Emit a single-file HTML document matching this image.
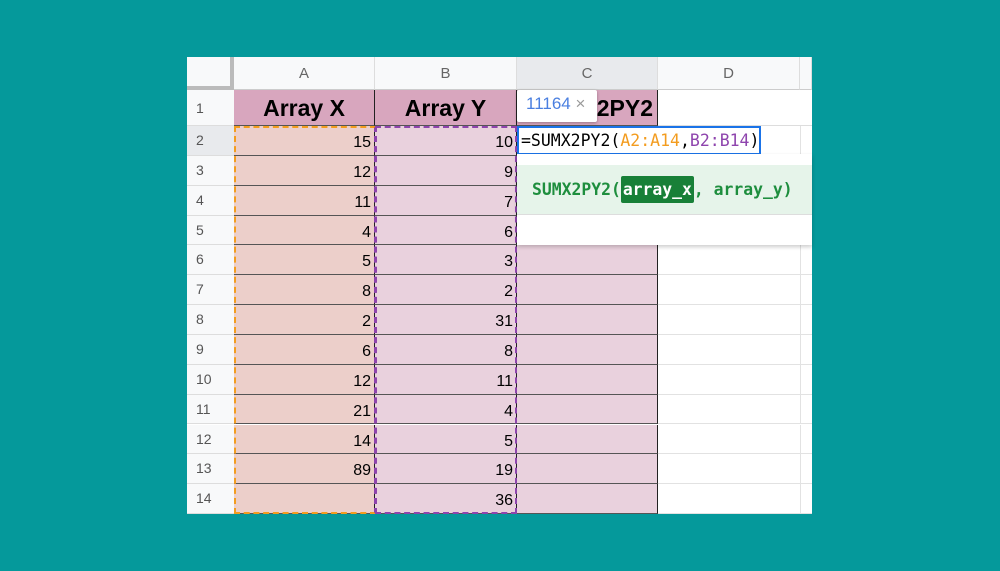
<!DOCTYPE html><html><head><style>
body{margin:0;width:1000px;height:571px;background:#05999b;position:relative;overflow:hidden;font-family:"Liberation Sans",Arial,sans-serif}
.a{position:absolute;box-sizing:border-box}
.sheet{left:187px;top:57px;width:625px;height:457px;background:#fff}
.hd{color:#666;font-size:15px;text-align:center;line-height:33px;top:0;height:33px;background:#f8f9fa;border-right:1px solid #ddd;border-bottom:1px solid #ccc}
.rn{left:0;width:47px;color:#555;font-size:14px;text-align:left;padding-left:9px;background:#f8f9fa;border-bottom:1px solid #ddd}
.c{font-size:16px;text-align:right;padding-right:3px;color:#000;border-bottom:1px solid #555;border-right:1px solid #222}
.mono{font-family:"DejaVu Sans Mono","Liberation Mono",monospace}
</style></head><body>
<div class="a sheet">
<div class="a hd" style="left:0;width:47px;border-right:4px solid #bbb;border-bottom:4px solid #bbb"></div>
<div class="a hd" style="left:47px;width:141px">A</div>
<div class="a hd" style="left:188px;width:142px">B</div>
<div class="a hd" style="left:330px;width:141px;background:#e8eaed">C</div>
<div class="a hd" style="left:471px;width:142px">D</div>
<div class="a hd" style="left:613px;width:12px"></div>
<div class="a rn" style="top:33px;height:36px;line-height:36px">1</div>
<div class="a c" style="left:47px;top:33px;width:141px;height:36px;background:#d8a6be;text-align:center;font-weight:bold;font-size:23px;line-height:36px;padding:0">Array X</div>
<div class="a c" style="left:188px;top:33px;width:142px;height:36px;background:#d8a6be;text-align:center;font-weight:bold;font-size:23px;line-height:36px;padding:0">Array Y</div>
<div class="a c" style="left:330px;top:33px;width:141px;height:36px;background:#d8a6be;text-align:right;font-weight:bold;font-size:23px;line-height:36px;padding-right:4px">2PY2</div>
<div class="a" style="left:471px;top:33px;width:154px;height:36px;border-bottom:1px solid #ddd"></div>
<div id="rows"></div>
<div class="a" style="left:47px;top:69px;width:142px;height:388px;border:2px dashed #f39c1f;border-right-color:#8e44ad"></div>
<div class="a" style="left:188px;top:69px;width:142px;height:388px;border:2px dashed #8e44ad"></div>
</div>
<div class="a" style="left:517px;top:90px;width:80px;height:32px;background:#fff;box-shadow:0 1px 3px rgba(0,0,0,.3);border-radius:2px;font-size:17px;line-height:28px;padding-left:9px;color:#4a7fe0">11164 <span style="color:#999">×</span></div>
<div class="a" style="left:517px;top:126px;width:244px;height:29px;background:#fff;border:2px solid #1a73e8;font-size:16.5px;line-height:25px;padding-left:2px;white-space:nowrap;overflow:hidden"><span class="mono">=SUMX2PY2(<span style="color:#f39c1f">A2:A14</span>,<span style="color:#8e44ad">B2:B14</span>)</span></div>
<div class="a" style="left:517px;top:154px;width:295px;height:91px;background:#fff;box-shadow:0 2px 4px rgba(0,0,0,.2)">
<div class="a mono" style="left:0;top:11px;width:295px;height:50px;background:#e6f4ea;border-bottom:1px solid #ddd;color:#1e8e3e;font-weight:bold;font-size:16.4px;line-height:50px;padding-left:15px;white-space:nowrap">SUMX2PY2(<span style="background:#188038;color:#fff;padding:4px 2px;border-radius:2px">array_x</span>, array_y)</div>
</div>
<script>
var A=[15,12,11,4,5,8,2,6,12,21,14,89,''],B=[10,9,7,6,3,2,31,8,11,4,5,19,36],h='';
for(var i=0;i<13;i++){var t=69+i*29.85,hh=29.85;
h+='<div class="a rn" style="top:'+t+'px;height:'+hh+'px;line-height:'+hh+'px;'+(i==0?'background:#e8eaed':'')+'">'+(i+2)+'</div>'+
'<div class="a c" style="left:47px;top:'+t+'px;width:141px;height:'+hh+'px;line-height:'+(hh+4)+'px;background:#eccfca">'+A[i]+'</div>'+
'<div class="a c" style="left:188px;top:'+t+'px;width:142px;height:'+hh+'px;line-height:'+(hh+4)+'px;background:#e9d1dd">'+B[i]+'</div>'+
'<div class="a c" style="left:330px;top:'+t+'px;width:141px;height:'+hh+'px;background:#e9d1dd"></div>'+
'<div class="a" style="left:471px;top:'+t+'px;width:154px;height:'+hh+'px;border-bottom:1px solid #e2e2e2"><div class="a" style="left:142px;top:0;width:1px;height:100%;background:#e2e2e2"></div></div>';}
document.getElementById('rows').outerHTML=h;
</script>
</body></html>
